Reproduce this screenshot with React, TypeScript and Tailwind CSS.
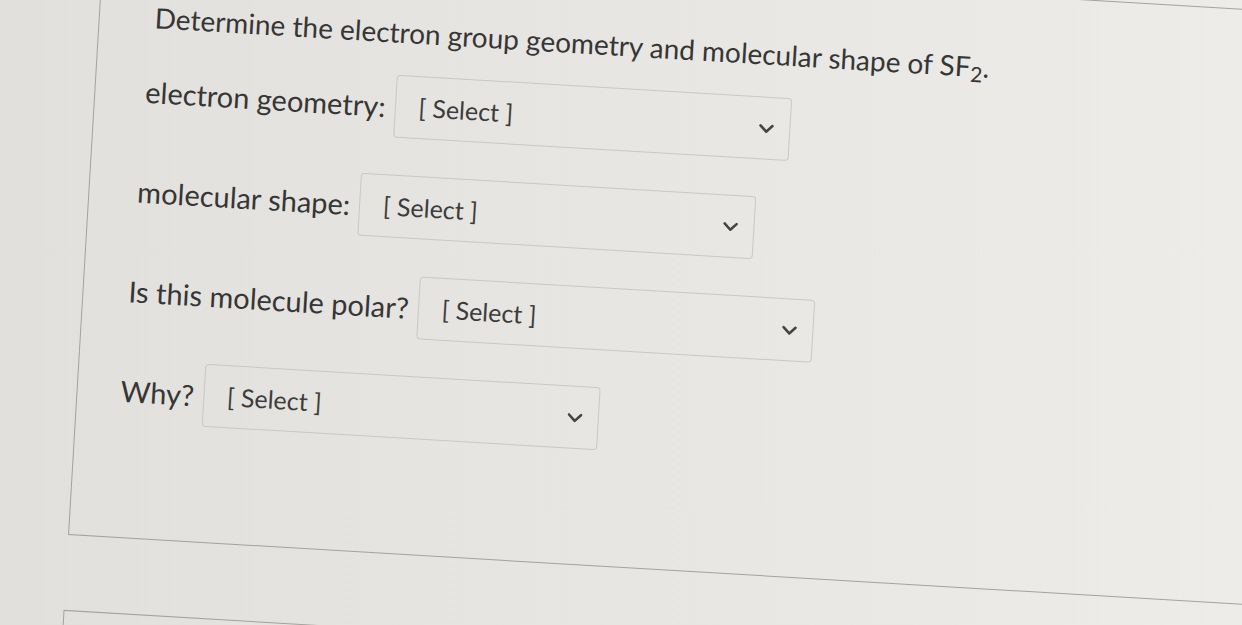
import React from 'react';
import { ChevronDown } from 'lucide-react';

interface Row {
  id: number;
  label: string;
  indent: string;
}

const rows: Row[] = [
  { id: 1, label: 'electron geometry:', indent: 'pl-[50px]' },
  { id: 2, label: 'molecular shape:', indent: 'pl-[48px]' },
  { id: 3, label: 'Is this molecule polar?', indent: 'pl-[45px]' },
  { id: 4, label: 'Why?', indent: 'pl-[43px]' },
];

const SelectBox: React.FC = () => (
  <div className="flex h-[63px] w-[396px] items-center justify-between rounded-[4px] border-[1.5px] border-[#c9c8c4] pl-[23px] pr-[11px]">
    <span className="text-[25px] text-[#3c3c3c]">[ Select ]</span>
    <ChevronDown size={24} strokeWidth={2.6} className="text-[#454545]" />
  </div>
);

const App: React.FC = () => {
  return (
    <div
      className="h-[625px] w-full overflow-hidden bg-gradient-to-r from-[#e1e0dc] via-[#e7e6e2] to-[#edece8] text-[#363636]"
      style={{ fontFamily: 'Lato, "Open Sans", sans-serif' }}
    >
      <div className="ml-[68px] -mt-[120px] w-[1400px] origin-[0px_655px] rotate-[3.4deg]">
        {/* question card */}
        <div className="h-[655px] border border-[#a3a29e]">
          <div className="h-[60px] border-b border-[#a3a29e]" />
          <div className="pt-[55px]">
            <p className="pl-[55px] text-[28px] leading-[34px]">
              Determine the electron group geometry and molecular shape of SF<sub>2</sub>.
            </p>
            <div className="mt-[26px] flex flex-col gap-[37px]">
              {rows.map((row) => (
                <div key={row.id} className={`flex items-center gap-[9px] ${row.indent}`}>
                  <span className="text-[29px] leading-[34px]">{row.label}</span>
                  <SelectBox />
                </div>
              ))}
            </div>
          </div>
        </div>

        {/* next card */}
        <div className="mt-[75px] h-[300px] border border-[#a3a29e]" />
      </div>
    </div>
  );
};

export default App;
